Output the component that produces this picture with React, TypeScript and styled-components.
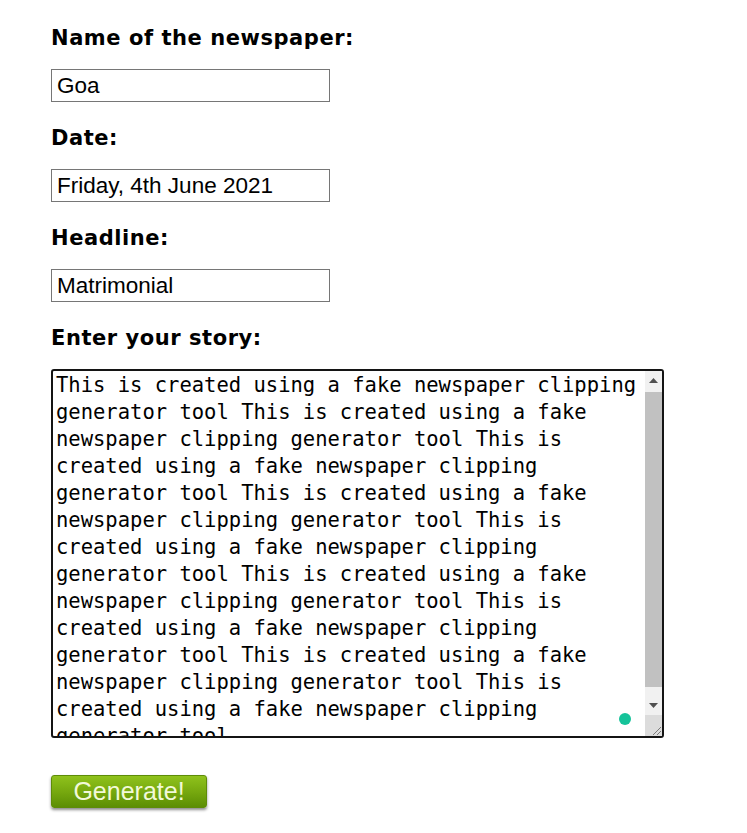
import React from "react";
import styled, { createGlobalStyle } from "styled-components";

const GlobalStyle = createGlobalStyle`
  html, body {
    margin: 0;
    padding: 0;
    background: #ffffff;
  }
  body {
    font-family: "Liberation Sans", Arial, sans-serif;
    color: #000;
  }
`;

const Page = styled.form`
  display: flex;
  flex-direction: column;
  align-items: flex-start;
  gap: 24px;
  padding: 26px 0 40px 51px;
`;

const Field = styled.div`
  display: flex;
  flex-direction: column;
  align-items: flex-start;
  gap: 19px;
`;

const Label = styled.label`
  font-family: "DejaVu Sans", Verdana, sans-serif;
  font-weight: bold;
  font-size: 21px;
  letter-spacing: 0.55px;
  line-height: 24px;
  color: #000;
`;

const TextInput = styled.input`
  box-sizing: border-box;
  width: 279px;
  height: 33px;
  margin: 0;
  padding: 0 5px;
  border: 1px solid #767676;
  border-radius: 0;
  font-family: "Liberation Sans", Arial, sans-serif;
  font-size: 22.5px;
  color: #000;
  background: #fff;
  outline: none;
`;

const StoryBox = styled.div`
  position: relative;
  box-sizing: border-box;
  display: flex;
  width: 613px;
  height: 369px;
  border: 2px solid #141414;
  border-radius: 3px;
  overflow: hidden;
  background: #fff;
`;

const StoryText = styled.textarea`
  flex: 1;
  min-width: 0;
  margin: 0;
  padding: 1px 0 0 3px;
  border: none;
  outline: none;
  resize: none;
  overflow: hidden;
  font-family: "DejaVu Sans Mono", monospace;
  font-size: 20.5px;
  line-height: 27px;
  color: #000;
  background: transparent;
`;

const ScrollRail = styled.div`
  display: flex;
  flex-direction: column;
  width: 17px;
  flex: none;
  background: #f1f1f1;
`;

const ArrowButton = styled.div`
  display: flex;
  align-items: center;
  justify-content: center;
  height: 19px;
  flex: none;
`;

const Track = styled.div`
  flex: 1;
  display: flex;
  flex-direction: column;
  padding: 2px 0 8px;
`;

const Thumb = styled.div`
  height: 295px;
  background: #c1c1c1;
`;

const Corner = styled.div`
  display: flex;
  align-items: flex-end;
  justify-content: flex-end;
  height: 21px;
  flex: none;
  background: #dcdcdc;
`;

const StatusDot = styled.span`
  position: absolute;
  left: 566px;
  top: 342px;
  width: 12px;
  height: 12px;
  border-radius: 50%;
  background: #15c39a;
`;

const GenerateButton = styled.button`
  margin-top: 13px;
  box-sizing: border-box;
  width: 156px;
  height: 33px;
  padding: 0;
  border: 1px solid #5e8c08;
  border-radius: 3px;
  background: linear-gradient(to bottom, #8fc21c 0%, #77a90f 50%, #5c8e04 100%);
  box-shadow: 0 2px 3px rgba(0, 0, 0, 0.45);
  font-family: "Liberation Sans", Arial, sans-serif;
  font-size: 25px;
  color: #f2f9d8;
  cursor: pointer;
`;

const story = Array(9)
  .fill("This is created using a fake newspaper clipping generator tool")
  .join(" ");

export default function App() {
  return (
    <>
      <GlobalStyle />
      <Page onSubmit={(e) => e.preventDefault()}>
        <Field>
          <Label htmlFor="paper">Name of the newspaper:</Label>
          <TextInput id="paper" defaultValue="Goa" />
        </Field>
        <Field>
          <Label htmlFor="date">Date:</Label>
          <TextInput id="date" defaultValue="Friday, 4th June 2021" />
        </Field>
        <Field>
          <Label htmlFor="headline">Headline:</Label>
          <TextInput id="headline" defaultValue="Matrimonial" />
        </Field>
        <Field>
          <Label htmlFor="story">Enter your story:</Label>
          <StoryBox>
            <StoryText id="story" defaultValue={story} spellCheck={false} />
            <ScrollRail aria-hidden="true">
              <ArrowButton>
                <svg width="9" height="5" viewBox="0 0 9 5">
                  <path d="M0 5 L4.5 0 L9 5 Z" fill="#505050" />
                </svg>
              </ArrowButton>
              <Track>
                <Thumb />
              </Track>
              <ArrowButton>
                <svg width="9" height="5" viewBox="0 0 9 5">
                  <path d="M0 0 L9 0 L4.5 5 Z" fill="#505050" />
                </svg>
              </ArrowButton>
              <Corner>
                <svg width="12" height="12" viewBox="0 0 12 12">
                  <path d="M11 3 L3 11 M11 7 L7 11" stroke="#7a7a7a" strokeWidth="1" />
                </svg>
              </Corner>
            </ScrollRail>
            <StatusDot />
          </StoryBox>
        </Field>
        <GenerateButton type="submit">Generate!</GenerateButton>
      </Page>
    </>
  );
}
